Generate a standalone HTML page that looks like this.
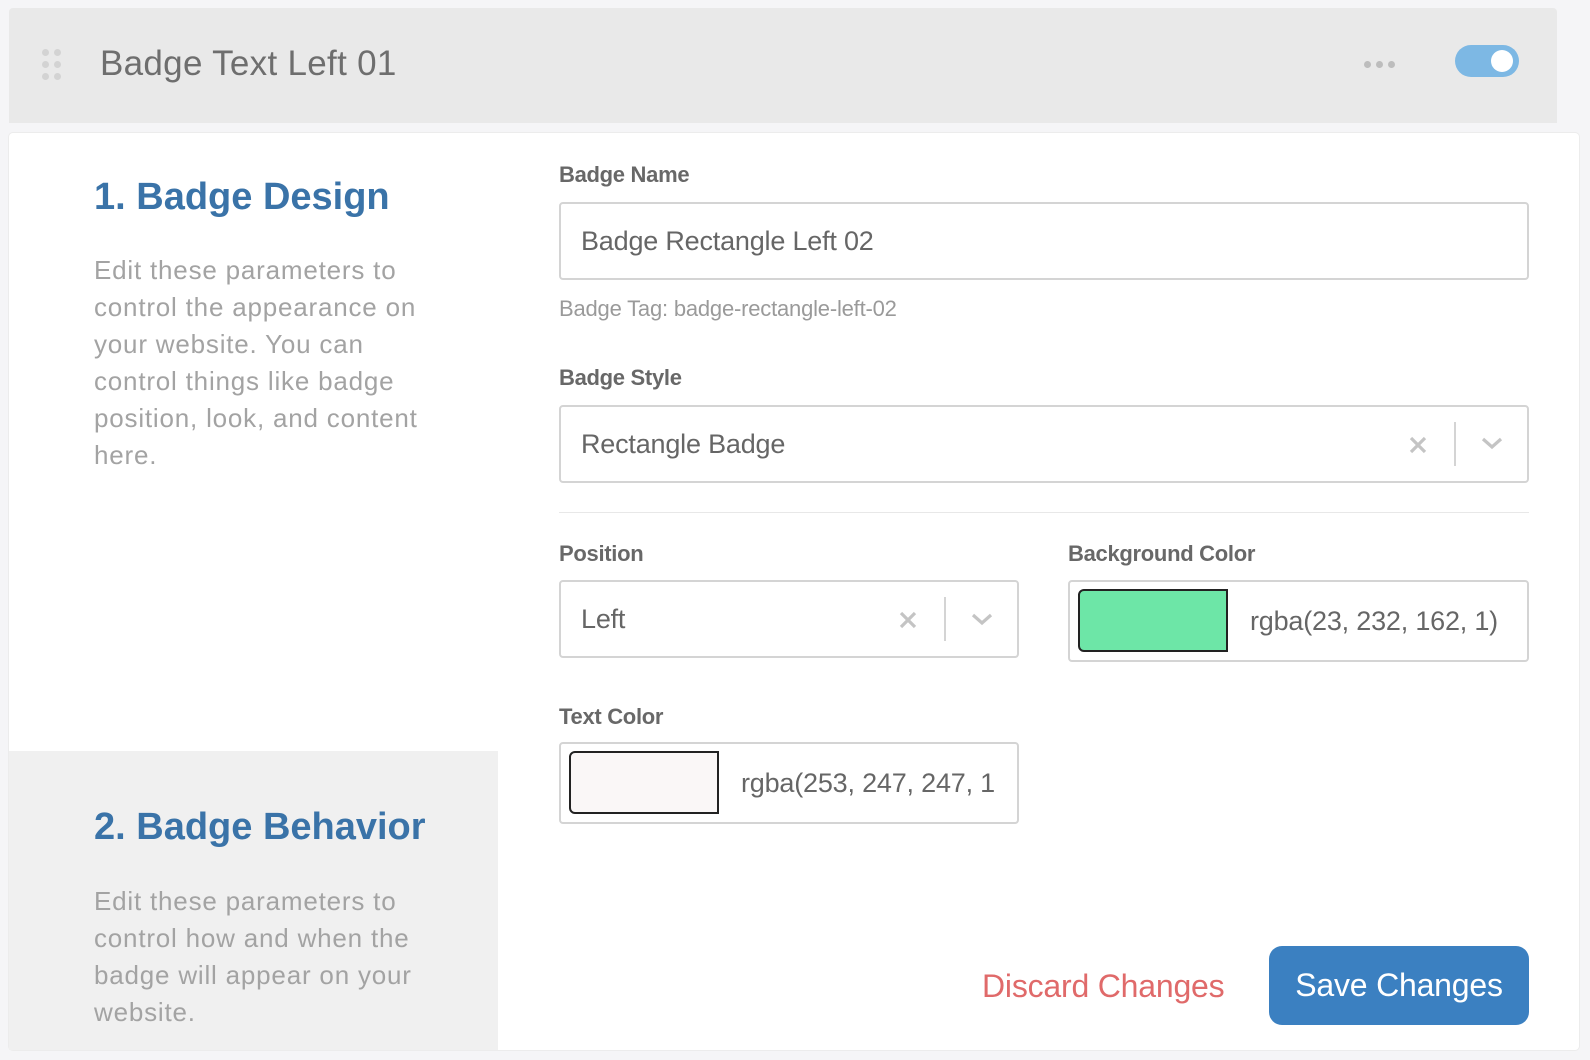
<!DOCTYPE html>
<html><head><meta charset="utf-8"><style>
*{box-sizing:border-box;margin:0;padding:0}
body{width:1590px;height:1060px;background:#f5f5f7;font-family:"Liberation Sans",Arial,sans-serif;position:relative;overflow:hidden}
.a{position:absolute}
.hdr{left:9px;top:8px;width:1548px;height:115px;background:#e9e9e9;border-radius:4px 4px 0 0}
.card{left:9px;top:133px;width:1570px;height:917px;background:#fff;border-radius:4px;box-shadow:0 0 0 1px #ececec}
.gray{left:9px;top:751px;width:489px;height:299px;background:#f0f0f0}
.h2{font-weight:bold;font-size:38px;color:#3a73a8;letter-spacing:0px}
.p{font-size:26px;line-height:37px;color:#a3a3a3;letter-spacing:0.8px;white-space:nowrap}
.lbl{font-weight:bold;font-size:22px;color:#686868;letter-spacing:-0.3px}
.box{border:2px solid #d4d4d4;border-radius:4px;background:#fff}
.txt{font-size:27px;color:#666;letter-spacing:-0.2px}
.dot{width:7px;height:7px;border-radius:50%;background:#d3d3d3}
</style></head><body>
<div class="a hdr"></div>
<div class="a dot" style="left:42px;top:49px"></div><div class="a dot" style="left:54px;top:49px"></div>
<div class="a dot" style="left:42px;top:61px"></div><div class="a dot" style="left:54px;top:61px"></div>
<div class="a dot" style="left:42px;top:73px"></div><div class="a dot" style="left:54px;top:73px"></div>
<div class="a" style="left:100px;top:44px;font-size:35px;color:#6e6e6e;letter-spacing:0.3px">Badge Text Left 01</div>
<div class="a" style="left:1364px;top:61px;width:7px;height:7px;border-radius:50%;background:#bdbdbd"></div>
<div class="a" style="left:1376px;top:61px;width:7px;height:7px;border-radius:50%;background:#bdbdbd"></div>
<div class="a" style="left:1388px;top:61px;width:7px;height:7px;border-radius:50%;background:#bdbdbd"></div>
<div class="a" style="left:1455px;top:45px;width:64px;height:32px;border-radius:16px;background:#7db8e4"></div>
<div class="a" style="left:1491px;top:50px;width:22px;height:22px;border-radius:50%;background:#fff"></div>

<div class="a card"></div>
<div class="a gray"></div>
<div class="a h2" style="left:94px;top:176px">1. Badge Design</div>
<div class="a p" style="left:94px;top:252px">Edit these parameters to<br>control the appearance on<br>your website. You can<br>control things like badge<br>position, look, and content<br>here.</div>
<div class="a h2" style="left:94px;top:806px">2. Badge Behavior</div>
<div class="a p" style="left:94px;top:883px">Edit these parameters to<br>control how and when the<br>badge will appear on your<br>website.</div>

<div class="a lbl" style="left:559px;top:162px">Badge Name</div>
<div class="a box" style="left:559px;top:202px;width:970px;height:78px"></div>
<div class="a txt" style="left:581px;top:226px">Badge Rectangle Left 02</div>
<div class="a" style="left:559px;top:296px;font-size:22px;color:#9a9a9a;letter-spacing:-0.2px">Badge Tag: badge-rectangle-left-02</div>

<div class="a lbl" style="left:559px;top:365px">Badge Style</div>
<div class="a box" style="left:559px;top:405px;width:970px;height:78px"></div>
<div class="a txt" style="left:581px;top:429px">Rectangle Badge</div>
<svg class="a" style="left:1408px;top:435px" width="20" height="20"><path d="M3 3L17 17M17 3L3 17" stroke="#c4c4c4" stroke-width="3.2"/></svg>
<div class="a" style="left:1454px;top:422px;width:2px;height:44px;background:#d4d4d4"></div>
<svg class="a" style="left:1480px;top:436px" width="24" height="16"><path d="M3 3L12 11L21 3" stroke="#c4c4c4" stroke-width="3.2" fill="none"/></svg>

<div class="a" style="left:559px;top:512px;width:970px;height:1px;background:#e8e8e8"></div>

<div class="a lbl" style="left:559px;top:541px">Position</div>
<div class="a box" style="left:559px;top:580px;width:460px;height:78px"></div>
<div class="a txt" style="left:581px;top:604px">Left</div>
<svg class="a" style="left:898px;top:610px" width="20" height="20"><path d="M3 3L17 17M17 3L3 17" stroke="#c4c4c4" stroke-width="3.2"/></svg>
<div class="a" style="left:944px;top:597px;width:2px;height:44px;background:#d4d4d4"></div>
<svg class="a" style="left:970px;top:612px" width="24" height="16"><path d="M3 3L12 11L21 3" stroke="#c4c4c4" stroke-width="3.2" fill="none"/></svg>

<div class="a lbl" style="left:1068px;top:541px">Background Color</div>
<div class="a box" style="left:1068px;top:580px;width:461px;height:82px"></div>
<div class="a" style="left:1078px;top:589px;width:150px;height:63px;background:#6de6a7;border:2px solid #222;border-radius:6px 0 0 6px"></div>
<div class="a txt" style="left:1250px;top:606px">rgba(23, 232, 162, 1)</div>

<div class="a lbl" style="left:559px;top:704px">Text Color</div>
<div class="a box" style="left:559px;top:742px;width:460px;height:82px"></div>
<div class="a" style="left:569px;top:751px;width:150px;height:63px;background:#faf7f7;border:2px solid #222;border-radius:6px 0 0 6px"></div>
<div class="a txt" style="left:741px;top:768px;white-space:nowrap">rgba(253, 247, 247, 1</div>

<div class="a" style="left:982px;top:968px;font-size:32px;color:#e06a6a;letter-spacing:-0.2px">Discard Changes</div>
<div class="a" style="left:1269px;top:946px;width:260px;height:79px;background:#3b80c1;border-radius:13px;color:#fff;font-size:32px;text-align:center;line-height:79px;letter-spacing:-0.2px">Save Changes</div>
</body></html>
